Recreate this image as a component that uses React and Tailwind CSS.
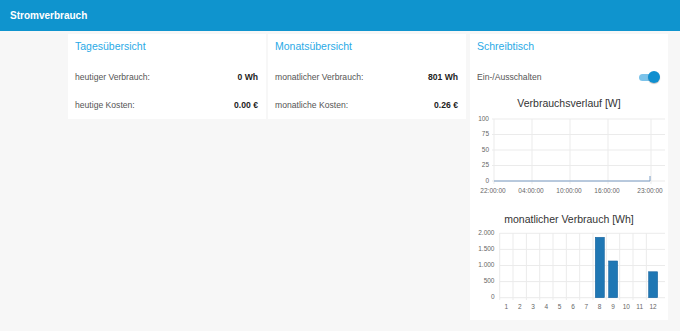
import React from 'react';

const font = { fontFamily: '"Liberation Sans", Arial, sans-serif' };

function StatCard({ title, rows }) {
  return (
    <div className="w-[198px] bg-white flex flex-col">
      <div className="h-[26px] flex items-center px-[7px] text-[10.5px] text-[#2aaae6]">{title}</div>
      <div className="mt-[3px]">
        {rows.map(([label, value]) => (
          <div key={label} className="h-[28px] flex items-center justify-between px-[7px] pr-[8px] text-[8.6px]">
            <span className="text-[#555]">{label}</span>
            <span className="text-[#222] font-bold">{value}</span>
          </div>
        ))}
      </div>
    </div>
  );
}

function LineChart() {
  const ys = [[100, 5], [75, 20.5], [50, 36], [25, 51.5], [0, 67]];
  const xs = [[24, '22:00:00'], [62, '04:00:00'], [100, '10:00:00'], [138, '16:00:00'], [181, '23:00:00']];
  return (
    <svg width="198" height="86" className="overflow-visible block">
      {ys.map(([v, y]) => (
        <g key={v}>
          <line x1="22" x2="195" y1={y} y2={y} stroke="#ebebeb" strokeWidth="1" />
          <text x="19" y={y} textAnchor="end" dominantBaseline="middle" fontSize="6.5" fill="#666" style={font}>{v}</text>
        </g>
      ))}
      {xs.map(([x, l]) => (
        <g key={l}>
          <line x1={x} x2={x} y1="5" y2="70" stroke="#ebebeb" strokeWidth="1" />
          <text x={x - 1} y="77" textAnchor="middle" dominantBaseline="middle" fontSize="6.5" fill="#666" style={font}>{l}</text>
        </g>
      ))}
      <polyline points="24,67 180,67 180,62" fill="none" stroke="#7b9cc4" strokeWidth="1" />
    </svg>
  );
}

function BarChart() {
  const zero = 65.7;
  const scale = 64.4 / 2000;
  const left = 29.7;
  const cw = 13.33;
  const ys = [['2.000', 2000], ['1.500', 1500], ['1.000', 1000], ['500', 500], ['0', 0]];
  const data = [0, 0, 0, 0, 0, 0, 0, 1876, 1140, 0, 0, 805];
  return (
    <svg width="198" height="84" className="overflow-visible block">
      {ys.map(([l, v]) => (
        <g key={l}>
          <line x1={left} x2="195" y1={zero - v * scale} y2={zero - v * scale} stroke="#ebebeb" strokeWidth="1" />
          <text x="24.5" y={zero - v * scale} textAnchor="end" dominantBaseline="middle" fontSize="6.5" fill="#666" style={font}>{l}</text>
        </g>
      ))}
      {data.map((v, i) => (
        <line key={'g' + i} x1={left + i * cw} x2={left + i * cw} y1="1" y2="68" stroke="#ebebeb" strokeWidth="1" />
      ))}
      {data.map((v, i) => (
        <g key={i}>
          {v > 0 && (
            <rect
              x={left + i * cw + 2.3}
              y={zero - v * scale}
              width="9"
              height={v * scale}
              fill="#1f77b4"
              stroke="#1a66a0"
              strokeWidth="0.6"
            />
          )}
          <text x={left + i * cw + cw / 2} y="75.3" textAnchor="middle" dominantBaseline="middle" fontSize="6.5" fill="#666" style={font}>{i + 1}</text>
        </g>
      ))}
    </svg>
  );
}

export default function App() {
  return (
    <div className="w-[680px] h-[331px] bg-[#f7f7f7] overflow-hidden" style={font}>
      <div className="h-[31px] bg-[#0f94ce] flex items-center px-[10px] text-white text-[10px] font-bold">
        Stromverbrauch
      </div>
      <div className="flex items-start pl-[68px] pt-[3px]">
        <StatCard title="Tagesübersicht" rows={[['heutiger Verbrauch:', '0 Wh'], ['heutige Kosten:', '0.00 €']]} />
        <div className="ml-[2px]">
          <StatCard title="Monatsübersicht" rows={[['monatlicher Verbrauch:', '801 Wh'], ['monatliche Kosten:', '0.26 €']]} />
        </div>
        <div className="ml-[4px] w-[198px] bg-white flex flex-col pb-[4px]">
          <div className="h-[26px] flex items-center px-[7px] text-[10.5px] text-[#2aaae6]">Schreibtisch</div>
          <div className="mt-[3px] h-[28px] flex items-center justify-between px-[7px] pr-[8px]">
            <span className="text-[8.6px] text-[#555]">Ein-/Ausschalten</span>
            <div className="relative w-[21px] h-[12px] flex items-center">
              <div className="w-[17px] h-[7px] rounded-full bg-[#7cc3ea]" />
              <div className="absolute right-0 top-0 w-[12px] h-[12px] rounded-full bg-[#0f8fd0] shadow-[0_1px_1px_rgba(0,0,0,0.25)]" />
            </div>
          </div>
          <div className="mt-[3px] h-[20px] flex items-center justify-center text-[10.5px] text-[#333]">Verbrauchsverlauf [W]</div>
          <LineChart />
          <div className="mt-[8px] h-[24px] flex items-center justify-center text-[10.5px] text-[#333]">monatlicher Verbrauch [Wh]</div>
          <BarChart />
        </div>
      </div>
    </div>
  );
}
